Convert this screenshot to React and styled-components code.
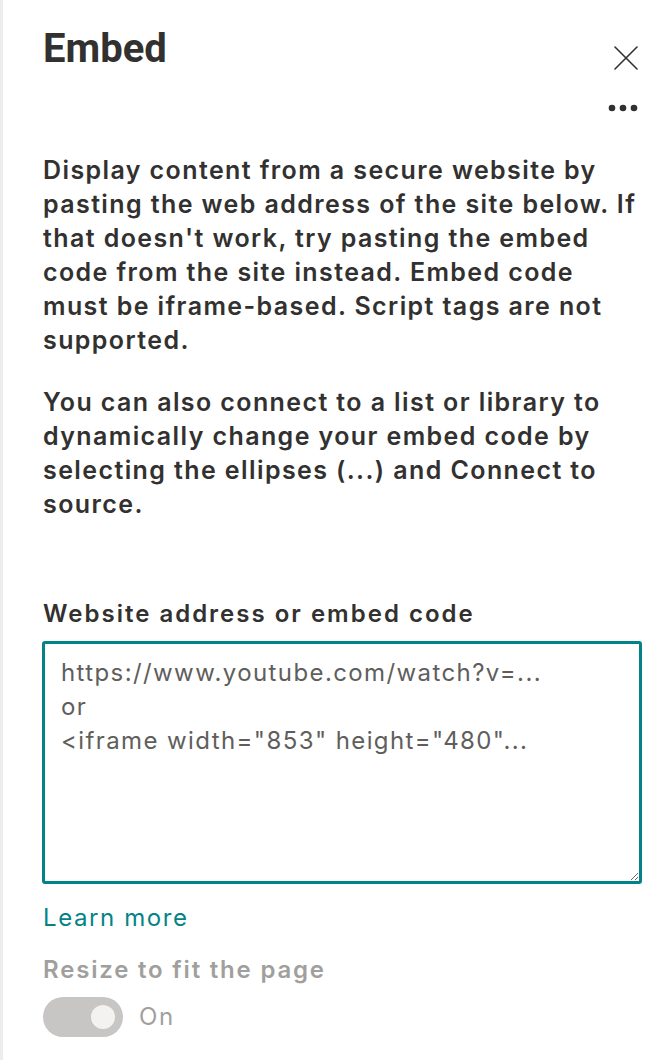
import React from "react";
import styled, { createGlobalStyle } from "styled-components";

const GlobalStyle = createGlobalStyle`
  html, body {
    margin: 0;
    padding: 0;
    background: #ffffff;
  }
  body {
    font-family: Inter, "Noto Sans", sans-serif;
    color: #323130;
  }
`;

const Panel = styled.aside`
  box-sizing: border-box;
  width: 670px;
  min-height: 1060px;
  border-left: 3px solid #ededed;
  padding: 24px 32px 0 40px;
`;

const Header = styled.header`
  display: flex;
  justify-content: space-between;
  align-items: flex-start;
`;

const Title = styled.h1`
  margin: 0;
  font-family: Roboto, "Liberation Sans", sans-serif;
  font-size: 40px;
  font-weight: 700;
  line-height: 50px;
  color: #323130;
`;

const Actions = styled.div`
  display: flex;
  flex-direction: column;
  align-items: flex-end;
  gap: 34px;
  padding-top: 22px;
`;

const IconButton = styled.button`
  display: flex;
  align-items: center;
  justify-content: center;
  padding: 0;
  border: none;
  background: none;
  cursor: pointer;
  color: #323130;
`;

const Body = styled.div`
  padding-top: 41px;
`;

const Paragraph = styled.p`
  margin: 0 0 28px;
  font-size: 25px;
  font-weight: 600;
  line-height: 34px;
  letter-spacing: 1.4px;
  color: #323130;
`;

const Field = styled.div`
  display: flex;
  flex-direction: column;
  margin-top: 76px;
`;

const Label = styled.label`
  font-size: 24px;
  font-weight: 600;
  line-height: 34px;
  letter-spacing: 2px;
  color: #323130;
  margin-bottom: 10px;
`;

const TextArea = styled.textarea`
  box-sizing: border-box;
  width: 600px;
  height: 243px;
  margin: 0 0 0 -1px;
  padding: 12px 16px;
  border: 3px solid #038387;
  border-radius: 3px;
  font-family: Inter, "Noto Sans", sans-serif;
  font-size: 24px;
  line-height: 34px;
  letter-spacing: 1.4px;
  color: #323130;
  resize: vertical;
  outline: none;

  &::placeholder {
    color: #605e5c;
  }
`;

const Link = styled.a`
  display: inline-block;
  margin-top: 17px;
  font-size: 24px;
  line-height: 34px;
  letter-spacing: 1.6px;
  color: #038387;
  text-decoration: none;
`;

const ToggleLabel = styled.div`
  margin-top: 18px;
  font-size: 24px;
  font-weight: 600;
  line-height: 34px;
  letter-spacing: 1.8px;
  color: #a19f9d;
`;

const ToggleRow = styled.div`
  display: flex;
  align-items: center;
  gap: 16px;
  margin-top: 10px;
`;

const Track = styled.span`
  box-sizing: border-box;
  display: flex;
  align-items: center;
  justify-content: ${(p) => (p.$on ? "flex-end" : "flex-start")};
  width: 80px;
  height: 40px;
  padding: 0 8px;
  border-radius: 20px;
  background: #c8c6c4;
`;

const Thumb = styled.span`
  width: 24px;
  height: 24px;
  border-radius: 50%;
  background: #f3f2f1;
`;

const ToggleText = styled.span`
  font-size: 24px;
  line-height: 34px;
  letter-spacing: 1.6px;
  color: #a19f9d;
`;

const placeholder =
  'https://www.youtube.com/watch?v=...\nor\n<iframe width="853" height="480"...';

export default function App() {
  return (
    <>
      <GlobalStyle />
      <Panel>
        <Header>
          <Title>Embed</Title>
          <Actions>
            <IconButton aria-label="Close">
              <svg width="24" height="24" viewBox="0 0 24 24">
                <path
                  d="M1 1 L23 23 M23 1 L1 23"
                  stroke="#323130"
                  strokeWidth="1.6"
                  strokeLinecap="round"
                />
              </svg>
            </IconButton>
            <IconButton aria-label="More options">
              <svg width="30" height="8" viewBox="0 0 30 8">
                <circle cx="4" cy="4" r="3.3" fill="#323130" />
                <circle cx="15" cy="4" r="3.3" fill="#323130" />
                <circle cx="26" cy="4" r="3.3" fill="#323130" />
              </svg>
            </IconButton>
          </Actions>
        </Header>

        <Body>
          <Paragraph>
            Display content from a secure website by pasting the web address
            of the site below. If that doesn't work, try pasting the embed code
            from the site instead. Embed code must be iframe-based. Script tags
            are not supported.
          </Paragraph>
          <Paragraph>
            You can also connect to a list or library to dynamically change
            your embed code by selecting the ellipses (...) and Connect to
            source.
          </Paragraph>

          <Field>
            <Label htmlFor="embed-code">Website address or embed code</Label>
            <TextArea id="embed-code" placeholder={placeholder} />
          </Field>

          <Link href="#">Learn more</Link>
          <ToggleLabel>Resize to fit the page</ToggleLabel>
          <ToggleRow>
            <Track $on>
              <Thumb />
            </Track>
            <ToggleText>On</ToggleText>
          </ToggleRow>
        </Body>
      </Panel>
    </>
  );
}
